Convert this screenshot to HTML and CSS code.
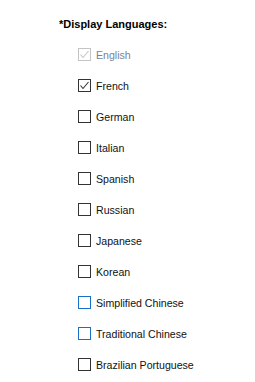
FILE: index.html
```html
<!DOCTYPE html>
<html lang="en">
<head>
    <meta charset="UTF-8">
    <title>Display Languages</title>
    <link rel="stylesheet" href="styles.css">
</head>
<body>
    <div class="field">
        <div class="field-label">*Display Languages:</div>
        <ul class="lang-list">
            <li class="lang disabled">
                <span class="box checked"><svg viewBox="0 0 11 11"><path d="M1.5 5.5 L4 8.5 L9.5 2"/></svg></span>
                <span class="name">English</span>
            </li>
            <li class="lang">
                <span class="box checked"><svg viewBox="0 0 11 11"><path d="M1.5 5.5 L4 8.5 L9.5 2"/></svg></span>
                <span class="name">French</span>
            </li>
            <li class="lang"><span class="box"></span><span class="name">German</span></li>
            <li class="lang"><span class="box"></span><span class="name">Italian</span></li>
            <li class="lang"><span class="box"></span><span class="name">Spanish</span></li>
            <li class="lang"><span class="box"></span><span class="name">Russian</span></li>
            <li class="lang"><span class="box"></span><span class="name">Japanese</span></li>
            <li class="lang"><span class="box"></span><span class="name">Korean</span></li>
            <li class="lang"><span class="box hover"></span><span class="name">Simplified Chinese</span></li>
            <li class="lang"><span class="box hover"></span><span class="name">Traditional Chinese</span></li>
            <li class="lang"><span class="box"></span><span class="name">Brazilian Portuguese</span></li>
        </ul>
    </div>
</body>
</html>
```

FILE: styles.css
```css
body {
    margin: 0;
    padding: 0;
    background-color: #ffffff;
    color: #111111;
    font-family: "Liberation Sans", Arial, sans-serif;
    font-size: 11px;
}
.field {
    padding: 18px 0 0 59px;
}
.field-label {
    font-weight: bold;
    font-size: 11px;
    line-height: 13px;
    color: #000;
}
.lang-list {
    list-style: none;
    margin: 0;
    padding: 17px 0 0 19px;
}
.lang {
    display: flex;
    align-items: center;
    height: 13px;
    margin-bottom: 18px;
}
.box {
    box-sizing: border-box;
    width: 13px;
    height: 13px;
    border: 1px solid #333333;
    background: #fff;
    display: flex;
    align-items: center;
    justify-content: center;
}
.box svg {
    width: 11px;
    height: 11px;
}
.box svg path {
    fill: none;
    stroke: #333;
    stroke-width: 1.1;
}
.box.hover {
    border-color: #1a6fc9;
}
.name {
    margin-left: 5px;
    font-size: 10.6px;
}
.lang.disabled .box {
    border-color: #c4c4c4;
}
.lang.disabled .box svg path {
    stroke: #c4c4c4;
}
.lang.disabled .name {
    color: #76829a;
}
```
